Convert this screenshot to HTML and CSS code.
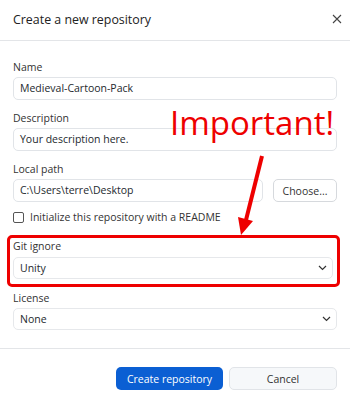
FILE: index.html
```html
<!DOCTYPE html>
<html>
<head>
<meta charset="utf-8">
<link rel="stylesheet" href="styles.css">
</head>
<body>
<div class="dialog">
  <div class="header">
    <div class="title">Create a new repository</div>
    <svg class="close" width="10" height="10" viewBox="0 0 10 10"><path d="M1 1L9 9M9 1L1 9" stroke="#444" stroke-width="1.1" fill="none"/></svg>
  </div>
  <div class="content">
    <div class="field">
      <div class="label">Name</div>
      <div class="input">Medieval-Cartoon-Pack</div>
    </div>
    <div class="field">
      <div class="label">Description</div>
      <div class="input">Your description here.</div>
    </div>
    <div class="field">
      <div class="label">Local path</div>
      <div class="path-row">
        <div class="input grow">C:\Users\terre\Desktop</div>
        <div class="btn choose">Choose...</div>
      </div>
    </div>
    <div class="check-row">
      <span class="checkbox"></span>
      <span>Initialize this repository with a README</span>
    </div>
    <div class="highlight">
      <div class="label">Git ignore</div>
      <div class="select">Unity<svg class="chev" width="9" height="6" viewBox="0 0 9 6"><path d="M1 1L4.5 4.5L8 1" stroke="#333" stroke-width="1.2" fill="none"/></svg></div>
    </div>
    <div class="field license">
      <div class="label">License</div>
      <div class="select">None<svg class="chev" width="9" height="6" viewBox="0 0 9 6"><path d="M1 1L4.5 4.5L8 1" stroke="#333" stroke-width="1.2" fill="none"/></svg></div>
    </div>
  </div>
  <div class="footer">
    <div class="btn primary">Create repository</div>
    <div class="btn cancel">Cancel</div>
  </div>
  <div class="important">Important!</div>
  <svg class="arrow" width="350" height="400" viewBox="0 0 350 400">
    <line x1="262" y1="156" x2="246" y2="220" stroke="#ee0000" stroke-width="4"/>
    <polygon points="238,217 253,221 241,235" fill="#ee0000"/>
  </svg>
</div>
</body>
</html>
```
FILE: styles.css
```css
* { box-sizing: border-box; }
html, body { margin: 0; padding: 0; background: #fff; }
body {
  font-family: "Open Sans", "Noto Sans", sans-serif;
  font-size: 10.5px;
  color: #24292e;
}
.dialog { position: relative; width: 350px; height: 400px; overflow: hidden; }
.header {
  height: 41px;
  border-bottom: 1px solid #e3e5e8;
  display: flex;
  align-items: center;
  justify-content: space-between;
  padding: 0 8px 2px 13px;
}
.title { font-size: 12.4px; color: #222; }
.content { padding: 18px 13px 0 13px; }
.field { margin-bottom: 10px; }
.label { height: 16px; line-height: 16px; color: #333; margin-bottom: 2px; }
.input {
  height: 23px;
  border: 1px solid #e1e4e8;
  border-radius: 5px;
  padding: 0 6px;
  line-height: 21px;
  color: #24292e;
}
.path-row { display: flex; gap: 10px; }
.grow { flex: 1; }
.btn {
  height: 23px;
  border-radius: 5px;
  display: flex;
  align-items: center;
  justify-content: center;
}
.choose {
  width: 64px;
  border: 1px solid #d6d9dd;
  background: #fff;
  color: #333;
}
.check-row {
  display: flex;
  align-items: center;
  gap: 6px;
  height: 16px;
  margin-top: -3px;
  color: #333;
}
.checkbox {
  width: 11px; height: 11px;
  border: 1px solid #555;
  border-radius: 2px;
  background: #fff;
}
.highlight {
  margin: 10px -3px 3px -6px;
  border: 3px solid #ee0000;
  border-radius: 5px;
  padding: 0 4px 5px 3px;
}
.highlight .label { margin-bottom: 3px; }
.select {
  height: 22px;
  border: 1px solid #e6e8eb;
  border-radius: 5px;
  padding: 0 6px;
  display: flex;
  align-items: center;
  justify-content: space-between;
}
.chev { margin-right: -1px; }
.license { margin-bottom: 0; }
.footer {
  margin-top: 18px;
  border-top: 1px solid #e3e5e8;
  padding: 18px 13px 0 0;
  display: flex;
  justify-content: flex-end;
  gap: 6px;
}
.primary {
  width: 107px;
  background: #0b5fd3;
  color: #fff;
}
.cancel {
  width: 108px;
  background: #f6f8fa;
  border: 1px solid #e1e4e8;
  color: #333;
}
.important {
  position: absolute;
  left: 170px;
  top: 102px;
  font-family: "Open Sans", sans-serif;
  font-size: 33px;
  line-height: 42px;
  color: #ee0000;
}
.arrow { position: absolute; left: 0; top: 0; pointer-events: none; }
```
